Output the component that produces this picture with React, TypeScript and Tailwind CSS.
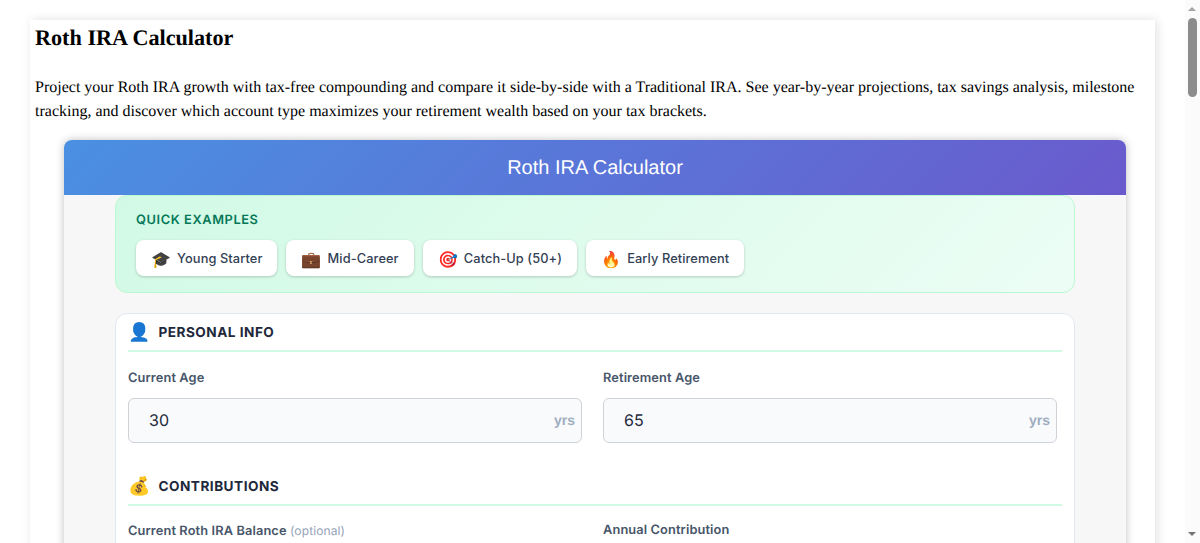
const inter = 'font-["Inter",sans-serif]';

const examples = [
  { icon: '🎓', label: 'Young Starter' },
  { icon: '💼', label: 'Mid-Career' },
  { icon: '🎯', label: 'Catch-Up (50+)' },
  { icon: '🔥', label: 'Early Retirement' },
];

function SectionTitle({ icon, title }: { icon: string; title: string }) {
  return (
    <div className="flex h-[38px] items-center gap-[8px] border-b-2 border-[#d1fae5] pt-[2px]">
      <span className="text-[18px] leading-none">{icon}</span>
      <span className="text-[13.6px] font-bold tracking-[0.5px] text-[#1e293b]">{title}</span>
    </div>
  );
}

function Field({ label, hint, value, suffix }: { label: string; hint?: string; value?: string; suffix?: string }) {
  return (
    <div>
      <div className="mb-[11px] text-[12.8px] leading-[16px] font-semibold tracking-[0.12px] text-[#475569]">
        {label} {hint && <span className="text-[12px] font-normal text-[#94a3b8]">{hint}</span>}
      </div>
      <div className="flex h-[45px] w-[454px] items-center justify-between rounded-[6px] border border-[#cfd2d6] bg-[#f9fafc] pr-[6px] pb-[1px] pl-[20px]">
        <span className="text-[16px] text-[#1e293b]">{value}</span>
        {suffix && <span className="font-['Liberation_Sans',sans-serif] text-[14px] font-semibold text-[#a0aec0]">{suffix}</span>}
      </div>
    </div>
  );
}

// the browser's own scrollbar doesn't show in the photo, so it is drawn over the page
function Scrollbar() {
  return (
    <div className="fixed top-0 right-0 bottom-0 w-[15px] bg-[#fbfbfb]">
      <div className="absolute top-[7px] left-[3px] h-0 w-0 border-x-[4.5px] border-b-[4.5px] border-x-transparent border-b-[#a3a3a3]" />
      <div className="absolute top-[18px] left-[3px] h-[79px] w-[9px] rounded-[5px] bg-[#8c8c8c]" />
      <div className="absolute bottom-[7px] left-[3px] h-0 w-0 border-x-[4.5px] border-t-[4.5px] border-x-transparent border-t-[#737373]" />
    </div>
  );
}

export default function App() {
  return (
    <div className="min-h-[900px] bg-white pt-[20px] pr-[45px] pl-[30px] font-['Liberation_Serif',serif] text-black [text-rendering:geometricPrecision]">
      <div className="p-[5px] pb-[30px] shadow-[2px_0_10px_rgba(0,0,0,0.12)]">
        <h1 className="mb-[25px] text-[22.2px] leading-[26px] font-bold">Roth IRA Calculator</h1>
        <p className="mb-[16px] text-[16px] leading-[24px]">
          Project your Roth IRA growth with tax-free compounding and compare it side-by-side with a Traditional IRA. See
          year-by-year projections, tax savings analysis, milestone tracking, and discover which account type maximizes
          your retirement wealth based on your tax brackets.
        </p>

        <div className="mr-[24px] ml-[29px] overflow-hidden rounded-[8px] bg-[#f7f7f7] shadow-[0_0_8px_rgba(0,0,0,0.25)]">
          <div className="flex h-[55px] items-center justify-center bg-[linear-gradient(135deg,#4a90e2,#6a5acd)] font-['Liberation_Sans',sans-serif] text-[20px] text-white">
            Roth IRA Calculator
          </div>

          <div className={`mx-[51px] ${inter}`}>
            <div className="mb-[20px] h-[98px] rounded-[12px] border border-[#bbf7d0] bg-[linear-gradient(135deg,#d1fae5,#ecfdf5)] px-[20px] pt-[17px]">
              <div className="mb-[11px] text-[12.8px] leading-[16px] font-semibold tracking-[0.6px] text-[#047857]">
                QUICK EXAMPLES
              </div>
              <div className="flex gap-[9px]">
                {examples.map((e) => (
                  <button
                    key={e.label}
                    className="flex h-[36px] items-center gap-[6px] rounded-[8px] bg-white px-[15px] pt-[1px] text-[12.8px] font-medium tracking-[0.1px] text-[#334155] shadow-[0_1px_3px_rgba(0,0,0,0.2)]"
                  >
                    <span className="text-[16px] leading-none">{e.icon}</span>
                    {e.label}
                  </button>
                ))}
              </div>
            </div>

            <div className="rounded-[12px] border border-[#e2e8f0] bg-white px-[12px] pb-[30px]">
              <SectionTitle icon="👤" title="PERSONAL INFO" />
              <div className="mt-[19px] mb-[25px] flex gap-[21px]">
                <Field label="Current Age" value="30" suffix="yrs" />
                <Field label="Retirement Age" value="65" suffix="yrs" />
              </div>
              <SectionTitle icon="💰" title="CONTRIBUTIONS" />
              <div className="mt-[17px] flex gap-[21px]">
                <Field label="Current Roth IRA Balance" hint="(optional)" />
                <Field label="Annual Contribution" />
              </div>
            </div>
          </div>
        </div>
      </div>
      <Scrollbar />
    </div>
  );
}
